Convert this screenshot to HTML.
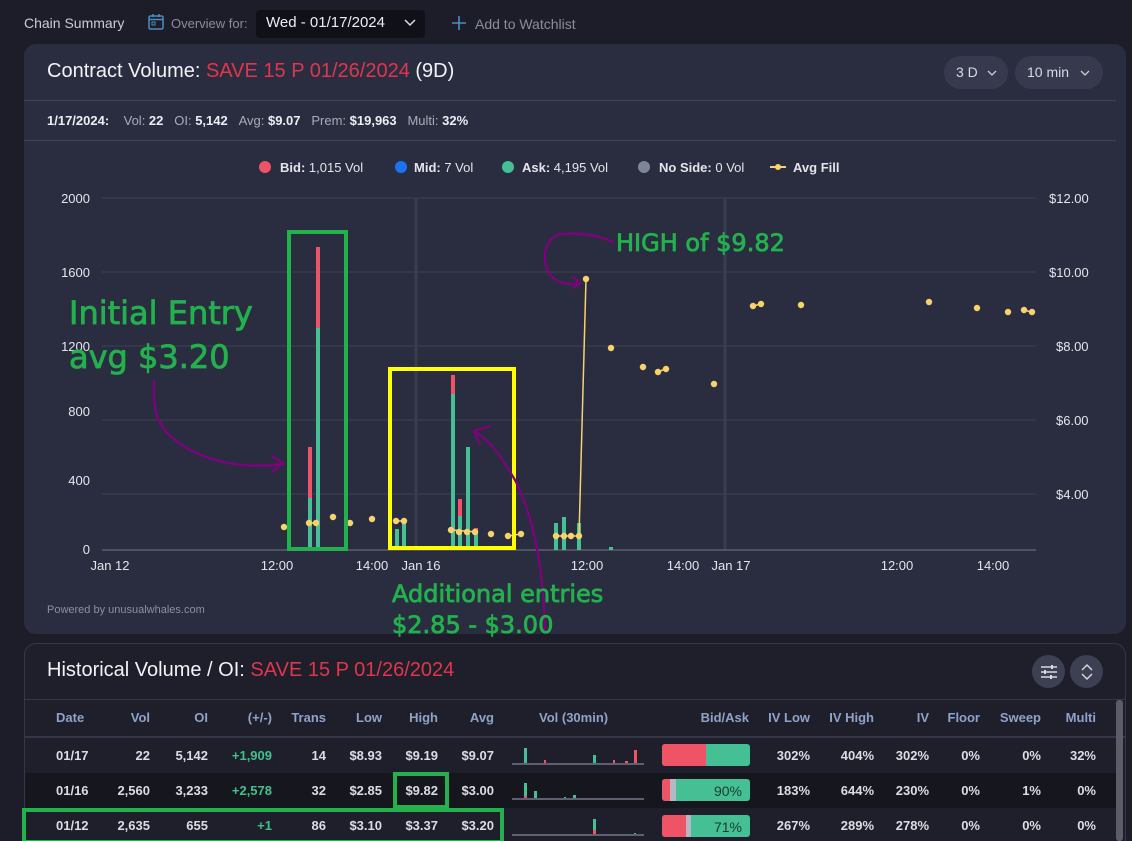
<!DOCTYPE html>
<html style="width:1132px;height:841px;overflow:hidden"><head><meta charset="utf-8">
<style>
*{box-sizing:border-box;margin:0;padding:0}
body{width:1132px;height:841px;overflow:hidden;background:#1c1d28;font-family:"Liberation Sans",sans-serif;color:#e6e7ee;position:relative}
.abs{position:absolute}
.card{position:absolute;left:24px;top:44px;width:1102px;height:590px;background:#2a2d40;border-radius:12px}
.card2{position:absolute;left:24px;top:643px;width:1102px;height:198px;background:#1e1f2b;border:1px solid #34364a;border-bottom:none;border-radius:12px 12px 0 0;overflow:hidden}
.pill{position:absolute;height:33px;border-radius:17px;background:#373a4f;color:#d7d9e4;font-size:14px;line-height:33px;padding-left:12px}
.t{position:absolute;font-size:13px;white-space:nowrap}
.th{position:absolute;top:710px;font-size:13px;font-weight:bold;color:#8ea3c9;white-space:nowrap}
.td{position:absolute;font-size:13px;font-weight:bold;color:#dcdde4;white-space:nowrap}
.r{text-align:right}
.hand{font-family:"DejaVu Sans","Liberation Sans",sans-serif;color:#22b14c;position:absolute;white-space:nowrap;-webkit-text-stroke:0.8px #22b14c}
</style></head><body>
<div class="t" style="left:24px;top:15px;color:#c9cbd6;font-size:14px">Chain Summary</div>
<svg class="abs" style="left:147px;top:13px" width="18" height="18" viewBox="0 0 18 18"><rect x="2" y="3" width="14" height="13" rx="1.5" fill="none" stroke="#4a8fc4" stroke-width="1.5"/><line x1="2" y1="6.5" x2="16" y2="6.5" stroke="#4a8fc4" stroke-width="1.5"/><line x1="6" y1="1" x2="6" y2="4" stroke="#4a8fc4" stroke-width="1.5"/><line x1="12" y1="1" x2="12" y2="4" stroke="#4a8fc4" stroke-width="1.5"/><rect x="5" y="9" width="3" height="3" fill="none" stroke="#4a8fc4" stroke-width="1"/></svg>
<div class="t" style="left:171px;top:16px;color:#8a8d9c;font-size:13px">Overview for:</div>
<div class="abs" style="left:256px;top:10px;width:169px;height:28px;background:#101118;border-radius:4px"></div>
<div class="t" style="left:266px;top:14px;color:#eceef5;font-size:15px">Wed - 01/17/2024</div>
<svg class="abs" style="left:404px;top:19px" width="12" height="8"><path d="M1 1 L6 6 L11 1" fill="none" stroke="#ddd" stroke-width="1.5"/></svg>
<svg class="abs" style="left:451px;top:15px" width="16" height="16"><path d="M8 1V15M1 8H15" stroke="#4a8fc4" stroke-width="1.6"/></svg>
<div class="t" style="left:475px;top:16px;color:#8a8d9c;font-size:14px">Add to Watchlist</div>

<div class="card"></div>
<div class="t" style="left:47px;top:60px;font-size:20px;color:#f2f3f7">Contract Volume: <span style="color:#e0364c">SAVE 15 P 01/26/2024</span> (9D)</div>
<div class="pill" style="left:944px;top:56px;width:64px">3 D</div>
<svg class="abs" style="left:987px;top:70px" width="10" height="6"><path d="M1 1L5 5L9 1" fill="none" stroke="#ccc" stroke-width="1.3"/></svg>
<div class="pill" style="left:1015px;top:56px;width:88px;padding-left:12px">10 min</div>
<svg class="abs" style="left:1080px;top:70px" width="10" height="6"><path d="M1 1L5 5L9 1" fill="none" stroke="#ccc" stroke-width="1.3"/></svg>
<div class="abs" style="left:24px;top:100px;width:1092px;height:1px;background:#414458"></div>
<div class="t" style="left:47px;top:113px;color:#a9abb8"><b style="color:#eceef5">1/17/2024:</b>&nbsp;&nbsp;&nbsp;&nbsp;Vol: <b style="color:#eceef5">22</b>&nbsp;&nbsp;&nbsp;OI: <b style="color:#eceef5">5,142</b>&nbsp;&nbsp;&nbsp;Avg: <b style="color:#eceef5">$9.07</b>&nbsp;&nbsp;&nbsp;Prem: <b style="color:#eceef5">$19,963</b>&nbsp;&nbsp;&nbsp;Multi: <b style="color:#eceef5">32%</b></div>
<div class="abs" style="left:24px;top:140px;width:1092px;height:1px;background:#414458"></div>

<svg class="abs" style="left:0;top:0" width="1132" height="641" viewBox="0 0 1132 641">
<g font-family="Liberation Sans, sans-serif" font-size="13" fill="#e4e5ec">
<circle cx="265" cy="167" r="6" fill="#ef5366"/><text x="280" y="172"><tspan font-weight="bold">Bid:</tspan> 1,015 Vol</text>
<circle cx="401" cy="167" r="6" fill="#1a73f0"/><text x="414" y="172"><tspan font-weight="bold">Mid:</tspan> 7 Vol</text>
<circle cx="508" cy="167" r="6" fill="#45c095"/><text x="522" y="172"><tspan font-weight="bold">Ask:</tspan> 4,195 Vol</text>
<circle cx="644" cy="167" r="6" fill="#7d8699"/><text x="659" y="172"><tspan font-weight="bold">No Side:</tspan> 0 Vol</text>
<line x1="770" y1="167" x2="786" y2="167" stroke="#f8d26b" stroke-width="2"/><circle cx="778" cy="167" r="3" fill="#f8d26b"/><text x="793" y="172" font-weight="bold">Avg Fill</text>
</g>
<g stroke="#3a3d52" stroke-width="1.2">
<line x1="102" y1="198" x2="1036" y2="198"/><line x1="102" y1="272" x2="1036" y2="272"/><line x1="102" y1="346" x2="1036" y2="346"/><line x1="102" y1="420" x2="1036" y2="420"/><line x1="102" y1="494" x2="1036" y2="494"/>
</g>
<line x1="416" y1="199" x2="416" y2="550" stroke="#3a3d52" stroke-width="3"/>
<line x1="725" y1="199" x2="725" y2="550" stroke="#3a3d52" stroke-width="3"/>
<line x1="102" y1="550" x2="1036" y2="550" stroke="#5b5e70" stroke-width="1.5"/>
<g font-family="Liberation Sans, sans-serif" font-size="13" fill="#e4e5ec" text-anchor="end">
<text x="90" y="203">2000</text><text x="90" y="277">1600</text><text x="90" y="351">1200</text><text x="90" y="416">800</text><text x="90" y="485">400</text><text x="90" y="554">0</text>
</g>
<g font-family="Liberation Sans, sans-serif" font-size="13" fill="#e4e5ec">
<text x="1049" y="203">$12.00</text><text x="1049" y="277">$10.00</text><text x="1056" y="351">$8.00</text><text x="1056" y="425">$6.00</text><text x="1056" y="499">$4.00</text>
</g>
<g font-family="Liberation Sans, sans-serif" font-size="13" fill="#e4e5ec" text-anchor="middle">
<text x="110" y="570">Jan 12</text><text x="277" y="570">12:00</text><text x="372" y="570">14:00</text><text x="421" y="570">Jan 16</text><text x="587" y="570">12:00</text><text x="683" y="570">14:00</text><text x="731" y="570">Jan 17</text><text x="897" y="570">12:00</text><text x="993" y="570">14:00</text>
</g>
<text x="47" y="613" font-family="Liberation Sans, sans-serif" font-size="11" fill="#8c8f9e">Powered by unusualwhales.com</text>
<g fill="#45c095">
<rect x="308" y="498" width="4" height="52"/><rect x="316" y="328" width="4" height="222"/>
<rect x="395" y="529" width="4" height="21"/><rect x="402" y="522" width="4" height="28"/>
<rect x="451" y="394" width="4" height="156"/><rect x="458" y="516" width="4" height="34"/><rect x="466" y="447" width="4" height="103"/><rect x="474" y="530" width="4" height="20"/>
<rect x="554" y="523" width="4" height="27"/><rect x="562" y="517" width="4" height="33"/><rect x="577" y="523" width="4" height="27"/><rect x="609" y="547" width="4" height="3"/>
</g>
<g fill="#ef5366">
<rect x="308" y="447" width="4" height="51"/><rect x="316" y="247" width="4" height="81"/><rect x="451" y="375" width="4" height="19"/><rect x="458" y="499" width="4" height="17"/><rect x="474" y="528" width="4" height="2"/>
</g>
<g stroke="#f8d26b" stroke-width="1.5">
<line x1="309" y1="523" x2="316" y2="523"/><line x1="396" y1="521" x2="403" y2="521"/><line x1="452" y1="530" x2="478" y2="532"/><line x1="508" y1="536" x2="521" y2="534"/><line x1="556" y1="536" x2="579" y2="536"/><line x1="579" y1="536" x2="586" y2="279"/><line x1="658" y1="372" x2="665" y2="369"/><line x1="753" y1="306" x2="761" y2="304"/><line x1="1024" y1="310" x2="1031" y2="312"/>
</g>
<g fill="#f8d26b">
<circle cx="284" cy="527" r="3.2"/><circle cx="309" cy="523" r="3.2"/><circle cx="316" cy="523" r="3.2"/><circle cx="333" cy="517" r="3.2"/><circle cx="350" cy="523" r="3.2"/><circle cx="372" cy="519" r="3.2"/><circle cx="396" cy="521" r="3.2"/><circle cx="404" cy="521" r="3.2"/>
<circle cx="451" cy="530" r="3.2"/><circle cx="459" cy="532" r="3.2"/><circle cx="467" cy="532" r="3.2"/><circle cx="475" cy="532" r="3.2"/><circle cx="491" cy="534" r="3.2"/><circle cx="508" cy="536" r="3.2"/><circle cx="521" cy="534" r="3.2"/>
<circle cx="556" cy="536" r="3.2"/><circle cx="564" cy="536" r="3.2"/><circle cx="571" cy="536" r="3.2"/><circle cx="579" cy="536" r="3.2"/><circle cx="586" cy="279" r="3.2"/>
<circle cx="611" cy="348" r="3.2"/><circle cx="643" cy="367" r="3.2"/><circle cx="658" cy="372" r="3.2"/><circle cx="666" cy="369" r="3.2"/><circle cx="714" cy="384" r="3.2"/>
<circle cx="753" cy="306" r="3.2"/><circle cx="761" cy="304" r="3.2"/><circle cx="801" cy="305" r="3.2"/><circle cx="929" cy="302" r="3.2"/><circle cx="977" cy="308" r="3.2"/><circle cx="1008" cy="312" r="3.2"/><circle cx="1024" cy="310" r="3.2"/><circle cx="1032" cy="312" r="3.2"/>
</g>
<rect x="289" y="232" width="57" height="317" fill="none" stroke="#22b14c" stroke-width="4"/>
<rect x="390" y="369" width="124" height="179" fill="none" stroke="#ffff00" stroke-width="4"/>
<g fill="none" stroke="#800080" stroke-width="2.2" stroke-linecap="round">
<path d="M154 381 C153 410 156 425 175 440 C200 460 240 470 283 464"/>
<path d="M272 456 L283 463 L272 472"/>
<path d="M545 630 C543 570 535 520 515 480 C500 455 490 440 475 432"/>
<path d="M490 426 L474 431 L480 445"/>
<path d="M612 242 C600 235 580 233 560 234 C545 238 540 260 550 275 C560 285 570 285 580 283"/>
<path d="M573 277 L580 283 L573 288"/>
</g>
</svg>
<div class="hand" style="left:69px;top:294px;font-size:32px">Initial Entry</div>
<div class="hand" style="left:69px;top:338px;font-size:32px">avg $3.20</div>
<div class="hand" style="left:616px;top:229px;font-size:24px">HIGH of $9.82</div>
<div class="hand" style="left:392px;top:580px;font-size:24px">Additional entries</div>
<div class="hand" style="left:392px;top:611px;font-size:24px">$2.85 - $3.00</div>

<div class="card2"></div>
<div class="t" style="left:47px;top:659px;font-size:20px;color:#f2f3f7">Historical Volume / OI: <span style="color:#e0364c">SAVE 15 P 01/26/2024</span></div>
<div class="abs" style="left:1032px;top:655px;width:33px;height:33px;border-radius:50%;background:#3d4052"></div>
<svg class="abs" style="left:1039px;top:662px" width="20" height="20"><g stroke="#d8dae3" stroke-width="1.5"><line x1="2" y1="5" x2="18" y2="5"/><line x1="2" y1="10" x2="18" y2="10"/><line x1="2" y1="15" x2="18" y2="15"/></g><g fill="#d8dae3"><rect x="12" y="3" width="2" height="4"/><rect x="5" y="8" width="2" height="4"/><rect x="11" y="13" width="2" height="4"/></g></svg>
<div class="abs" style="left:1070px;top:655px;width:33px;height:33px;border-radius:50%;background:#3d4052"></div>
<svg class="abs" style="left:1077px;top:662px" width="20" height="20"><path d="M5 8L10 3L15 8M5 12L10 17L15 12" fill="none" stroke="#d8dae3" stroke-width="1.4"/></svg>
<div class="abs" style="left:25px;top:699px;width:1100px;height:1px;background:#34364a"></div>
<div class="th" style="left:56px">Date</div>
<div class="th r" style="left:100px;width:50px">Vol</div>
<div class="th r" style="left:160px;width:48px">OI</div>
<div class="th r" style="left:222px;width:50px">(+/-)</div>
<div class="th r" style="left:276px;width:50px">Trans</div>
<div class="th r" style="left:332px;width:50px">Low</div>
<div class="th r" style="left:388px;width:50px">High</div>
<div class="th r" style="left:444px;width:50px">Avg</div>
<div class="th" style="left:539px">Vol (30min)</div>
<div class="th r" style="left:680px;width:69px">Bid/Ask</div>
<div class="th r" style="left:750px;width:60px">IV Low</div>
<div class="th r" style="left:810px;width:64px">IV High</div>
<div class="th r" style="left:870px;width:59px">IV</div>
<div class="th r" style="left:930px;width:50px">Floor</div>
<div class="th r" style="left:980px;width:61px">Sweep</div>
<div class="th r" style="left:1040px;width:56px">Multi</div>
<div class="abs" style="left:25px;top:736px;width:1100px;height:2px;background:#34364a"></div>
<div class="abs" style="left:25px;top:773px;width:1092px;height:35px;background:#16171e"></div>
<div class="abs" style="left:1116px;top:700px;width:7px;height:141px;border-radius:3px;background:#5a5c66"></div>

<div class="td" style="left:56px;top:748px">01/17</div><div class="td r" style="left:100px;top:748px;width:50px">22</div><div class="td r" style="left:150px;top:748px;width:58px">5,142</div><div class="td r" style="left:212px;top:748px;width:60px;color:#3fc08d">+1,909</div><div class="td r" style="left:276px;top:748px;width:50px">14</div><div class="td r" style="left:332px;top:748px;width:50px">$8.93</div><div class="td r" style="left:388px;top:748px;width:50px">$9.19</div><div class="td r" style="left:444px;top:748px;width:50px">$9.07</div>
<div class="td" style="left:56px;top:783px">01/16</div><div class="td r" style="left:90px;top:783px;width:60px">2,560</div><div class="td r" style="left:150px;top:783px;width:58px">3,233</div><div class="td r" style="left:212px;top:783px;width:60px;color:#3fc08d">+2,578</div><div class="td r" style="left:276px;top:783px;width:50px">32</div><div class="td r" style="left:332px;top:783px;width:50px">$2.85</div><div class="td r" style="left:388px;top:783px;width:50px">$9.82</div><div class="td r" style="left:444px;top:783px;width:50px">$3.00</div>
<div class="td" style="left:56px;top:818px">01/12</div><div class="td r" style="left:90px;top:818px;width:60px">2,635</div><div class="td r" style="left:150px;top:818px;width:58px">655</div><div class="td r" style="left:212px;top:818px;width:60px;color:#3fc08d">+1</div><div class="td r" style="left:276px;top:818px;width:50px">86</div><div class="td r" style="left:332px;top:818px;width:50px">$3.10</div><div class="td r" style="left:388px;top:818px;width:50px">$3.37</div><div class="td r" style="left:444px;top:818px;width:50px">$3.20</div>

<svg class="abs" style="left:0;top:730px" width="1132" height="111">
<g fill="#5d6070"><rect x="512" y="33" width="132" height="2"/><rect x="512" y="68" width="132" height="2"/><rect x="512" y="104" width="132" height="2"/></g>
<g fill="#45c095"><rect x="524" y="18" width="3" height="15"/><rect x="593" y="25" width="3" height="8"/><rect x="524" y="53" width="3" height="15"/><rect x="534" y="61" width="3" height="7"/><rect x="564" y="67" width="2" height="1"/><rect x="573" y="65" width="3" height="3"/><rect x="593" y="89" width="3" height="11"/><rect x="634" y="103" width="2" height="1"/></g>
<g fill="#ef5366"><rect x="544" y="30" width="2" height="3"/><rect x="613" y="30" width="2" height="3"/><rect x="625" y="31" width="3" height="2"/><rect x="634" y="20" width="3" height="13"/><rect x="524" y="66" width="3" height="2"/><rect x="593" y="100" width="3" height="4"/></g>
<rect x="662" y="14" width="88" height="22" rx="3" fill="#45c095"/><path d="M665 14H706V36H665A3 3 0 0 1 662 33V17A3 3 0 0 1 665 14Z" fill="#ef5366"/>
<rect x="662" y="49" width="88" height="22" rx="3" fill="#45c095"/><path d="M665 49H670V71H665A3 3 0 0 1 662 68V52A3 3 0 0 1 665 49Z" fill="#ef5366"/><rect x="670" y="49" width="6" height="22" fill="#b4b8c4"/>
<rect x="662" y="85" width="88" height="22" rx="3" fill="#45c095"/><path d="M665 85H686V107H665A3 3 0 0 1 662 104V88A3 3 0 0 1 665 85Z" fill="#ef5366"/><rect x="686" y="85" width="5" height="22" fill="#b4b8c4"/>
<g font-family="Liberation Sans, sans-serif" font-size="14" fill="#1d3a30" text-anchor="end"><text x="742" y="66">90%</text><text x="742" y="102">71%</text></g>
<rect x="395" y="44" width="52" height="33" fill="none" stroke="#22b14c" stroke-width="4"/>
<rect x="24" y="80" width="478" height="32" fill="none" stroke="#22b14c" stroke-width="4"/>
</svg>

<div class="td r" style="left:750px;top:748px;width:60px">302%</div><div class="td r" style="left:810px;top:748px;width:64px">404%</div><div class="td r" style="left:870px;top:748px;width:59px">302%</div><div class="td r" style="left:930px;top:748px;width:50px">0%</div><div class="td r" style="left:980px;top:748px;width:61px">0%</div><div class="td r" style="left:1040px;top:748px;width:56px">32%</div>
<div class="td r" style="left:750px;top:783px;width:60px">183%</div><div class="td r" style="left:810px;top:783px;width:64px">644%</div><div class="td r" style="left:870px;top:783px;width:59px">230%</div><div class="td r" style="left:930px;top:783px;width:50px">0%</div><div class="td r" style="left:980px;top:783px;width:61px">1%</div><div class="td r" style="left:1040px;top:783px;width:56px">0%</div>
<div class="td r" style="left:750px;top:818px;width:60px">267%</div><div class="td r" style="left:810px;top:818px;width:64px">289%</div><div class="td r" style="left:870px;top:818px;width:59px">278%</div><div class="td r" style="left:930px;top:818px;width:50px">0%</div><div class="td r" style="left:980px;top:818px;width:61px">0%</div><div class="td r" style="left:1040px;top:818px;width:56px">0%</div>
</body></html>
